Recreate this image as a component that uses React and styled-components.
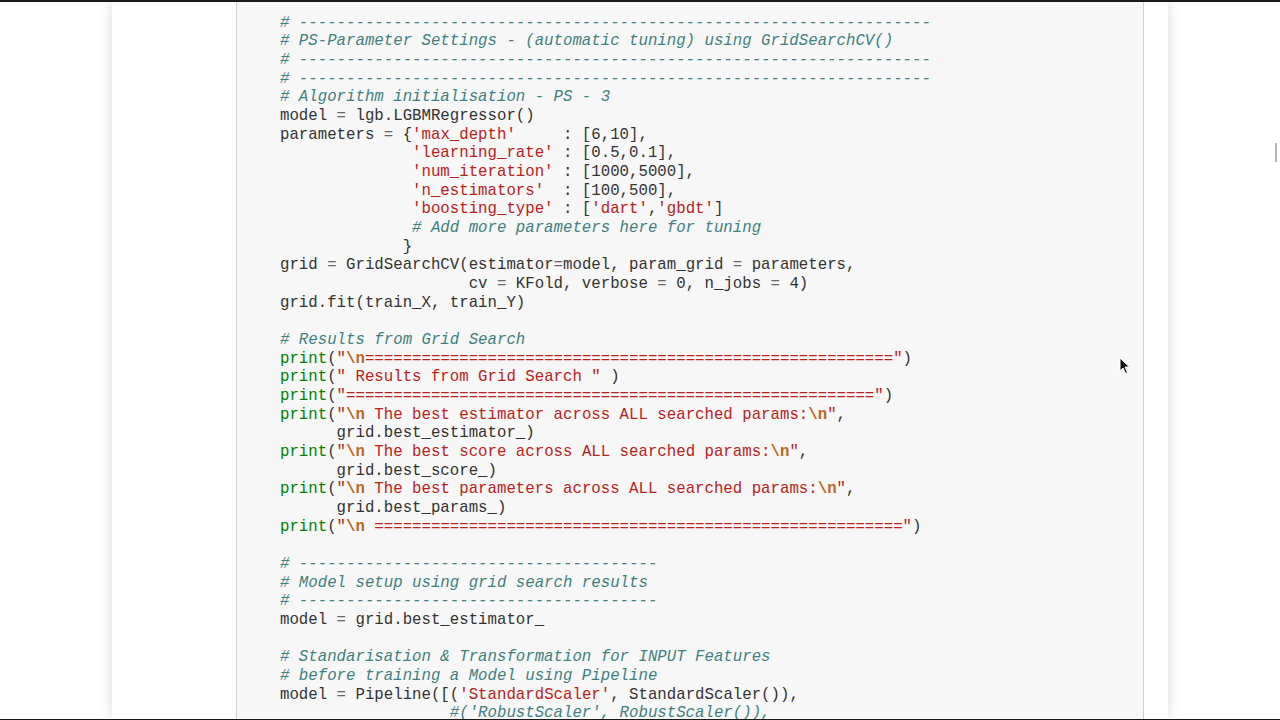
import React from "react"
import styled, { createGlobalStyle } from "styled-components"

const GlobalStyle = createGlobalStyle`
  html, body {
    margin: 0;
    padding: 0;
    background: #ffffff;
    overflow: hidden;
  }
`

const Screen = styled.div`
  position: relative;
  width: 100vw;
  height: 100vh;
  overflow: hidden;
  background: #ffffff;
  border-top: 2px solid #1a1a1a;
  border-bottom: 1px solid #1a1a1a;
  box-sizing: border-box;
`

const Notebook = styled.div`
  width: 1056px;
  height: 100%;
  margin: 0 112px;
  background: #ffffff;
  box-shadow: 0 0 12px 1px rgba(87, 87, 87, 0.18);
  display: flex;
`

const Prompt = styled.div`
  width: 124px;
  flex-shrink: 0;
`

const InputArea = styled.div`
  width: 908px;
  flex-shrink: 0;
  background: #f7f7f7;
  border-left: 1px solid #cfcfcf;
  border-right: 1px solid #cfcfcf;
  box-sizing: border-box;
`

const Code = styled.pre`
  margin: 0;
  padding: 11.5px 0 0 43px;
  font-family: "Liberation Mono", "DejaVu Sans Mono", monospace;
  font-size: 15.72px;
  line-height: 18.68px;
  color: #333333;
  white-space: pre;
`

const Line = styled.div`
  height: 18.68px;
`

const Comment = styled.span`
  color: #408080;
  font-style: italic;
`

const Str = styled.span`
  color: #ba2121;
`

const Escape = styled.span`
  color: #bb6622;
  font-weight: bold;
`

const Builtin = styled.span`
  color: #008000;
`

const Op = styled.span`
  color: #666666;
`

const ScrollThumb = styled.div`
  position: absolute;
  right: 3px;
  top: 141px;
  width: 2px;
  height: 19px;
  background: #b5b5b5;
`

const Pointer = styled.svg`
  position: absolute;
  left: 1119px;
  top: 355px;
`

const dash = n => "-".repeat(n)
const eq = n => "=".repeat(n)

const source = [
  "# " + dash(67),
  "# PS-Parameter Settings - (automatic tuning) using GridSearchCV()",
  "# " + dash(67),
  "# " + dash(67),
  "# Algorithm initialisation - PS - 3",
  "model = lgb.LGBMRegressor()",
  "parameters = {'max_depth'     : [6,10],",
  "              'learning_rate' : [0.5,0.1],",
  "              'num_iteration' : [1000,5000],",
  "              'n_estimators'  : [100,500],",
  "              'boosting_type' : ['dart','gbdt']",
  "              # Add more parameters here for tuning",
  "             }",
  "grid = GridSearchCV(estimator=model, param_grid = parameters,",
  "                    cv = KFold, verbose = 0, n_jobs = 4)",
  "grid.fit(train_X, train_Y)",
  "",
  "# Results from Grid Search",
  'print("\\n' + eq(56) + '")',
  'print(" Results from Grid Search " )',
  'print("' + eq(56) + '")',
  'print("\\n The best estimator across ALL searched params:\\n",',
  "      grid.best_estimator_)",
  'print("\\n The best score across ALL searched params:\\n",',
  "      grid.best_score_)",
  'print("\\n The best parameters across ALL searched params:\\n",',
  "      grid.best_params_)",
  'print("\\n ' + eq(56) + '")',
  "",
  "# " + dash(38),
  "# Model setup using grid search results",
  "# " + dash(38),
  "model = grid.best_estimator_",
  "",
  "# Standarisation & Transformation for INPUT Features",
  "# before training a Model using Pipeline",
  "model = Pipeline([('StandardScaler', StandardScaler()),",
  "                  #('RobustScaler', RobustScaler()),",
]

// split a string literal into plain text and bold \n escapes
const stringParts = (text, key) => {
  const parts = text.split("\\n")
  const out = []
  parts.forEach((p, i) => {
    if (i > 0) out.push(<Escape key={key + "e" + i}>\n</Escape>)
    if (p) out.push(<Str key={key + "s" + i}>{p}</Str>)
  })
  return out
}

const highlight = line => {
  const out = []
  let buf = ""
  let i = 0
  const flush = () => {
    if (buf) out.push(<span key={"p" + i + out.length}>{buf}</span>)
    buf = ""
  }
  while (i < line.length) {
    const c = line[i]
    if (c === "#") {
      flush()
      out.push(<Comment key={"c" + i}>{line.slice(i)}</Comment>)
      break
    }
    if (c === '"' || c === "'") {
      flush()
      const end = line.indexOf(c, i + 1)
      const lit = line.slice(i, end + 1)
      out.push(...stringParts(lit, "q" + i))
      i = end + 1
      continue
    }
    if (line.startsWith("print", i) && (i === 0 || !/\w/.test(line[i - 1]))) {
      flush()
      out.push(<Builtin key={"b" + i}>print</Builtin>)
      i += 5
      continue
    }
    if (c === "=") {
      flush()
      out.push(<Op key={"o" + i}>=</Op>)
      i += 1
      continue
    }
    buf += c
    i += 1
  }
  flush()
  return out
}

const App = () => {
  return (
    <Screen>
      <GlobalStyle />
      <Notebook>
        <Prompt />
        <InputArea>
          <Code>
            {source.map((line, n) => (
              <Line key={n}>{line ? highlight(line) : " "}</Line>
            ))}
          </Code>
        </InputArea>
      </Notebook>
      <ScrollThumb />
      <Pointer width="12" height="18" viewBox="0 0 12 18">
        <path
          d="M1 1 L1 14 L4 11 L6.5 16.5 L8.5 15.5 L6 10 L10.5 10 Z"
          fill="#111"
          stroke="#fff"
          strokeWidth="1"
        />
      </Pointer>
    </Screen>
  )
}

export default App
